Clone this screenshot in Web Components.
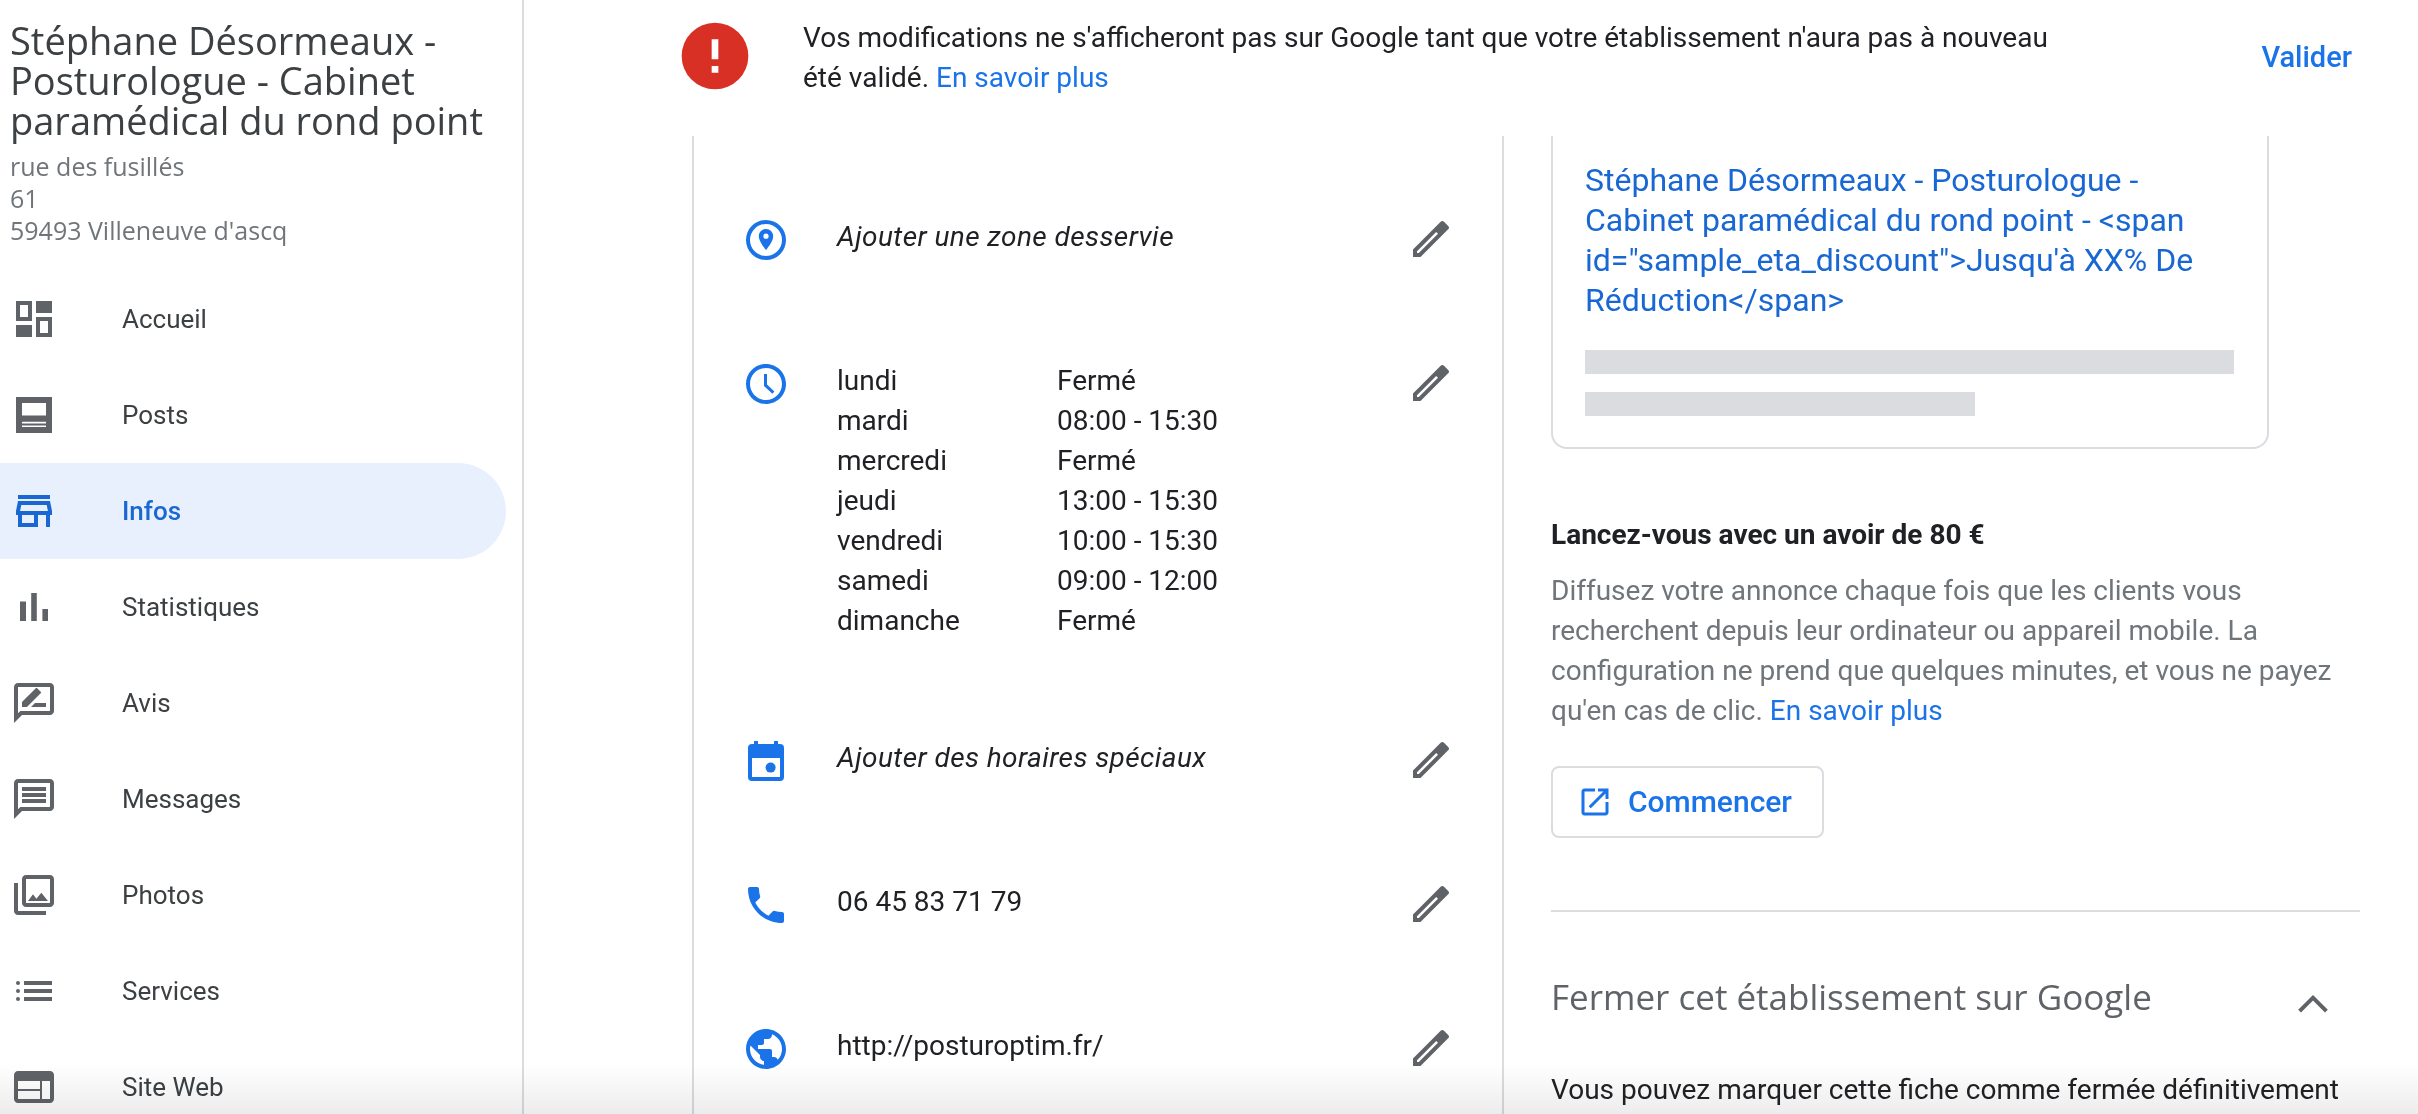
<!DOCTYPE html>
<html lang="fr">
<head>
<meta charset="utf-8">
<title>Infos</title>
<style>
  html, body { margin: 0; height: 100%; background: #fff; overflow: hidden; }
  body { font-family: Roboto, "Liberation Sans", sans-serif; color: #202124; }
  em { letter-spacing: .42px; }
</style>
</head>
<body>
<gmb-app></gmb-app>

<script>
const ICONS = {
    dashboard: '<path fill-rule="evenodd" d="M3 3h8v10H3zM5 5v6h4V5zM13 3h8v6h-8zM3 15h8v6H3zM13 11h8v10h-8zM15 13v6h4v-6z"/>',
    posts: '<path fill-rule="evenodd" d="M3 3h18v18H3zM6 6v6.2h12V6zM6 15.4v.9h12v-.9zM6 17.2v.8h12v-.8z"/>',
    store: '<path d="M18.36 9l.6 3H5.04l.6-3h12.72M20 4H4v2h16V4zm0 3H4l-1 5v2h1v6h10v-6h4v6h2v-6h1v-2l-1-5zM6 18v-4h6v4H6z"/>',
    stats: '<path d="M5 9.2h3V19H5zM10.6 5h2.8v14h-2.8zm5.6 8H19v6h-2.8z"/>',
    review: '<path d="M20 2H4c-1.1 0-2 .9-2 2v18l4-4h14c1.1 0 2-.9 2-2V4c0-1.1-.9-2-2-2zm0 14H5.17L4 17.17V4h16v12z"/><path d="M6 14v-2.47l6.88-6.88c.2-.2.51-.2.71 0l1.77 1.77c.2.2.2.51 0 .71L8.47 14H6zM18 14h-7.5l2-2H18z"/>',
    chat: '<path d="M20 2H4c-1.1 0-2 .9-2 2v18l4-4h14c1.1 0 2-.9 2-2V4c0-1.1-.9-2-2-2zm0 14H5.17L4 17.17V4h16v12z"/><path d="M6 6h12v2H6zM6 9h12v2H6zM6 12h12v2H6z"/>',
    photos: '<path d="M20 4v12H8V4h12m0-2H8c-1.1 0-2 .9-2 2v12c0 1.1.9 2 2 2h12c1.1 0 2-.9 2-2V4c0-1.1-.9-2-2-2zm-8.5 9.67l1.69 2.26 2.48-3.1L19 15H9zM2 6v14c0 1.1.9 2 2 2h14v-2H4V6H2z"/>',
    list: '<circle cx="4" cy="8" r="1"/><circle cx="4" cy="12" r="1"/><circle cx="4" cy="16" r="1"/><path d="M7 7h14v2H7zM7 11h14v2H7zM7 15h14v2H7z"/>',
    web: '<path d="M20 4H4c-1.1 0-1.99.9-1.99 2L2 18c0 1.1.9 2 2 2h16c1.1 0 2-.9 2-2V6c0-1.1-.9-2-2-2zm-5 14H4v-4h11v4zm0-5H4V9h11v4zm5 5h-4V9h4v9z"/>',
    pin: '<path fill-rule="evenodd" d="M12 2a10 10 0 1 0 0 20 10 10 0 0 0 0-20zm0 2a8 8 0 1 1 0 16 8 8 0 0 1 0-16z"/><path fill-rule="evenodd" d="M12 6.5c-2 0-3.6 1.6-3.6 3.6 0 2.7 3.6 6.9 3.6 6.9s3.6-4.2 3.6-6.9c0-2-1.6-3.6-3.6-3.6zm0 2.3a1.3 1.3 0 1 1 0 2.6 1.3 1.3 0 0 1 0-2.6z"/>',
    clock: '<path d="M11.99 2C6.47 2 2 6.48 2 12s4.47 10 9.99 10C17.52 22 22 17.52 22 12S17.52 2 11.99 2zM12 20c-4.42 0-8-3.58-8-8s3.58-8 8-8 8 3.58 8 8-3.58 8-8 8z"/><path d="M12.5 7H11v6l4.2 3.9 1-1.1-3.7-3.5z"/>',
    event: '<path d="M6 2h2v2H6zM16 2h2v2h-2z"/><path fill-rule="evenodd" d="M5 3.5h14a2 2 0 0 1 2 2V20a2 2 0 0 1-2 2H5a2 2 0 0 1-2-2V5.5a2 2 0 0 1 2-2zM5 10.5V20h14v-9.5z"/><circle cx="14.3" cy="15.3" r="2.5"/>',
    phone: '<path d="M6.62 10.79c1.44 2.83 3.76 5.14 6.59 6.59l2.2-2.2c.27-.27.67-.36 1.02-.24 1.12.37 2.33.57 3.57.57.55 0 1 .45 1 1V20c0 .55-.45 1-1 1-9.39 0-17-7.61-17-17 0-.55.45-1 1-1h3.5c.55 0 1 .45 1 1 0 1.25.2 2.45.57 3.57.11.35.03.74-.25 1.02l-2.2 2.2z"/>',
    globe: '<path d="M12 2C6.48 2 2 6.48 2 12s4.48 10 10 10 10-4.48 10-10S17.52 2 12 2zm-1 17.93c-3.95-.49-7-3.85-7-7.93 0-.62.08-1.21.21-1.79L9 15v1c0 1.1.9 2 2 2v1.93zm6.9-2.54c-.26-.81-1-1.39-1.9-1.39h-1v-3c0-.55-.45-1-1-1H8v-2h2c.55 0 1-.45 1-1V7h2c1.1 0 2-.9 2-2v-.41c2.93 1.19 5 4.06 5 7.41 0 2.08-.8 3.97-2.1 5.39z"/>',
    edit: '<path fill-rule="evenodd" d="M3 17.25V21h3.75L20.71 7.04c.39-.39.39-1.02 0-1.41l-2.34-2.34c-.39-.39-1.02-.39-1.41 0L3 17.25zM5 19v-.9l9.6-9.6.9.9L5.9 19z"/>',
    launch: '<path d="M19 19H5V5h7V3H5c-1.11 0-2 .9-2 2v14c0 1.1.89 2 2 2h14c1.1 0 2-.9 2-2v-7h-2v7zM14 3v2h3.59l-9.83 9.83 1.41 1.41L19 6.41V10h2V3h-7z"/>',
    chevron: '<path d="M12 8l-7.4 7.4L6 16.8l6-6 6 6 1.4-1.4z"/>',
    alert: '<path fill-rule="evenodd" d="M12 2a10 10 0 1 0 0 20 10 10 0 0 0 0-20zM11 7h2v6h-2zM11 15h2v2h-2z"/>'
};

class GmbIcon extends HTMLElement {
    constructor() {
        super();
        this.attachShadow({ mode: 'open' });
    }
    connectedCallback() {
        const size = this.getAttribute('size') || 48;
        const color = this.getAttribute('color') || '#5f6368';
        this.shadowRoot.innerHTML = `
            <style>
                :host { display: block; flex: none; width: ${size}px; height: ${size}px; }
                svg { display: block; width: 100%; height: 100%; fill: ${color}; }
            </style>
            <svg viewBox="0 0 24 24">${ICONS[this.getAttribute('name')]}</svg>
        `;
    }
}

class NavItem extends HTMLElement {
    constructor() {
        super();
        this.attachShadow({ mode: 'open' });
    }
    connectedCallback() {
        const active = this.hasAttribute('active');
        this.shadowRoot.innerHTML = `
            <style>
                :host { display: flex; align-items: center; height: 96px; margin-right: 16px; padding-left: 10px;
                    border-radius: 0 48px 48px 0; font-size: 26px; color: ${active ? '#1967d2' : '#3c4043'};
                    font-weight: ${active ? 500 : 400}; background: ${active ? '#e8f0fe' : 'transparent'}; }
                span { margin-left: 64px; }
            </style>
            <gmb-icon name="${this.getAttribute('icon')}" color="${active ? '#1967d2' : '#5f6368'}"></gmb-icon>
            <span><slot></slot></span>
        `;
    }
}

class GmbSidebar extends HTMLElement {
    constructor() {
        super();
        this.attachShadow({ mode: 'open' });
        this.shadowRoot.innerHTML = `
            <style>
                :host { display: block; flex: none; box-sizing: border-box; width: 524px; height: 1114px;
                    border-right: 2px solid #dadce0; overflow: hidden; padding-top: 20px; }
                .head { padding-left: 10px; }
                h1 { margin: 0; font: 400 38px/40px "Open Sans", sans-serif; color: #3c4043; }
                address { margin-top: 10px; font: 400 25px/32px "Open Sans", sans-serif; color: #70757a; }
                nav { margin-top: 25px; }
            </style>
            <div class="head">
                <h1>Stéphane Désormeaux - Posturologue - Cabinet paramédical du rond point</h1>
                <address>rue des fusillés<br>61<br>59493 Villeneuve d'ascq</address>
            </div>
            <nav><slot></slot></nav>
        `;
    }
}

class AlertBanner extends HTMLElement {
    constructor() {
        super();
        this.attachShadow({ mode: 'open' });
        this.shadowRoot.innerHTML = `
            <style>
                :host { display: flex; flex: none; height: 136px; box-sizing: border-box; padding: 18px 66px 0 151px;
                    font-size: 28px; line-height: 40px; color: #202124; background: #fff; }
                p { margin: 0 0 0 48px; width: 1260px; }
                a { color: #1a73e8; }
                gmb-icon { margin-top: -2px; }
                .action { margin-left: auto; margin-top: 19px; color: #1a73e8; font-size: 29px; font-weight: 500; }
            </style>
            <gmb-icon name="alert" size="80" color="#d93025"></gmb-icon>
            <p>Vos modifications ne s'afficheront pas sur Google tant que votre établissement n'aura pas à nouveau été validé. <a>En savoir plus</a></p>
            <span class="action">Valider</span>
        `;
    }
}

class InfoCard extends HTMLElement {
    constructor() {
        super();
        this.attachShadow({ mode: 'open' });
        this.shadowRoot.innerHTML = `
            <style>
                :host { display: flex; flex-direction: column; gap: 96px; flex: none; box-sizing: border-box; width: 812px;
                    margin-left: 168px; padding: 80px 0 0 48px; border: solid #dadce0; border-width: 0 2px;
                    font-size: 28px; line-height: 40px; color: #202124; }
            </style>
            <slot></slot>
        `;
    }
}

class InfoRow extends HTMLElement {
    constructor() {
        super();
        this.attachShadow({ mode: 'open' });
    }
    connectedCallback() {
        this.shadowRoot.innerHTML = `
            <style>
                :host { display: flex; }
                .body { flex: 1; margin: 1px 0 0 47px; min-height: 47px; }
                gmb-icon.edit { margin-right: 47px; margin-top: -1px; }
            </style>
            <gmb-icon name="${this.getAttribute('icon')}" color="#1a73e8"></gmb-icon>
            <div class="body"><slot></slot></div>
            <gmb-icon class="edit" name="edit"></gmb-icon>
        `;
    }
}

class OpeningHours extends HTMLElement {
    constructor() {
        super();
        this.attachShadow({ mode: 'open' });
        const hours = [
            ['lundi', 'Fermé'], ['mardi', '08:00 - 15:30'], ['mercredi', 'Fermé'], ['jeudi', '13:00 - 15:30'],
            ['vendredi', '10:00 - 15:30'], ['samedi', '09:00 - 12:00'], ['dimanche', 'Fermé']
        ];
        this.shadowRoot.innerHTML = `
            <style>
                :host { display: grid; grid-template-columns: 220px auto; }
            </style>
            ${hours.map(([day, time]) => `<span>${day}</span><span>${time}</span>`).join('')}
        `;
    }
}

class AdPanel extends HTMLElement {
    constructor() {
        super();
        this.attachShadow({ mode: 'open' });
        this.shadowRoot.innerHTML = `
            <style>
                :host { display: block; flex: none; box-sizing: border-box; width: 809px; margin-left: 47px;
                    font-size: 28px; line-height: 40px; color: #202124; }
                .preview { box-sizing: border-box; width: 718px; height: 313px; padding: 24px 33px 0 32px; border: 2px solid #dadce0;
                    border-top: 0; border-radius: 0 0 16px 16px; color: #1967d2; font-size: 32px; }
                .bar { height: 24px; margin-top: 18px; background: #dadce0; }
                .bar.first { margin-top: 30px; }
                .bar.short { width: 390px; }
                h3 { margin: 66px 0 0; font-size: 28px; line-height: 40px; font-weight: 700; color: #202124; }
                p { margin: 16px 0 0; color: #70757a; }
                a { color: #1a73e8; }
                .btn { display: inline-flex; align-items: center; box-sizing: border-box; height: 72px; width: 273px;
                    margin-top: 35px; padding-left: 24px; border: 2px solid #dadce0; border-radius: 8px;
                    color: #1a73e8; font-size: 30px; font-weight: 500; }
                .btn span { margin-left: 15px; }
                hr { margin: 72px 0 0; border: 0; border-top: 2px solid #dadce0; }
                .close { display: flex; justify-content: space-between; align-items: flex-start; margin-top: 61px; padding-right: 23px; }
                h2 { margin: 0; font: 400 35px/48px "Open Sans", sans-serif; color: #5f6368; }
                .close gmb-icon { margin-top: 6px; }
                .note { margin: 43px 0 0; color: #202124; }
            </style>
            <div class="preview">
                Stéphane Désormeaux - Posturologue - Cabinet paramédical du rond point - &lt;span id="sample_eta_discount"&gt;Jusqu'à XX% De Réduction&lt;/span&gt;
                <div class="bar first"></div>
                <div class="bar short"></div>
            </div>
            <h3>Lancez-vous avec un avoir de 80 €</h3>
            <p>Diffusez votre annonce chaque fois que les clients vous recherchent depuis leur ordinateur ou appareil mobile. La configuration ne prend que quelques minutes, et vous ne payez qu'en cas de clic. <a>En savoir plus</a></p>
            <div class="btn"><gmb-icon name="launch" size="36" color="#1a73e8"></gmb-icon><span>Commencer</span></div>
            <hr>
            <div class="close">
                <h2>Fermer cet établissement sur Google</h2>
                <gmb-icon name="chevron" color="#5f6368"></gmb-icon>
            </div>
            <p class="note">Vous pouvez marquer cette fiche comme fermée définitivement ou la supprimer de votre compte.</p>
        `;
    }
}

class GmbApp extends HTMLElement {
    constructor() {
        super();
        this.attachShadow({ mode: 'open' });
        this.shadowRoot.innerHTML = `
            <style>
                :host { display: flex; height: 1114px; overflow: hidden; position: relative; }
                main { flex: 1; min-width: 0; display: flex; flex-direction: column; }
                .columns { display: flex; flex: 1; min-height: 0; overflow: hidden; }
                em { letter-spacing: .42px; }
                /* browser bottom shade lies over everything, darkens the white only */
                .shade { position: absolute; left: 0; right: 0; bottom: 0; height: 50px; pointer-events: none;
                    mix-blend-mode: multiply; background: linear-gradient(to bottom, #fff, #ececec); }
            </style>
            <gmb-sidebar>
                <nav-item icon="dashboard">Accueil</nav-item>
                <nav-item icon="posts">Posts</nav-item>
                <nav-item icon="store" active>Infos</nav-item>
                <nav-item icon="stats">Statistiques</nav-item>
                <nav-item icon="review">Avis</nav-item>
                <nav-item icon="chat">Messages</nav-item>
                <nav-item icon="photos">Photos</nav-item>
                <nav-item icon="list">Services</nav-item>
                <nav-item icon="web">Site Web</nav-item>
            </gmb-sidebar>
            <main>
                <alert-banner></alert-banner>
                <div class="columns">
                    <info-card>
                        <info-row icon="pin"><em>Ajouter une zone desservie</em></info-row>
                        <info-row icon="clock"><opening-hours></opening-hours></info-row>
                        <info-row icon="event"><em>Ajouter des horaires spéciaux</em></info-row>
                        <info-row icon="phone">06 45 83 71 79</info-row>
                        <info-row icon="globe">http://posturoptim.fr/</info-row>
                    </info-card>
                    <ad-panel></ad-panel>
                </div>
            </main>
            <div class="shade"></div>
        `;
    }
}

customElements.define('gmb-icon', GmbIcon);
customElements.define('nav-item', NavItem);
customElements.define('gmb-sidebar', GmbSidebar);
customElements.define('alert-banner', AlertBanner);
customElements.define('info-card', InfoCard);
customElements.define('info-row', InfoRow);
customElements.define('opening-hours', OpeningHours);
customElements.define('ad-panel', AdPanel);
customElements.define('gmb-app', GmbApp);
</script>
</body>
</html>
